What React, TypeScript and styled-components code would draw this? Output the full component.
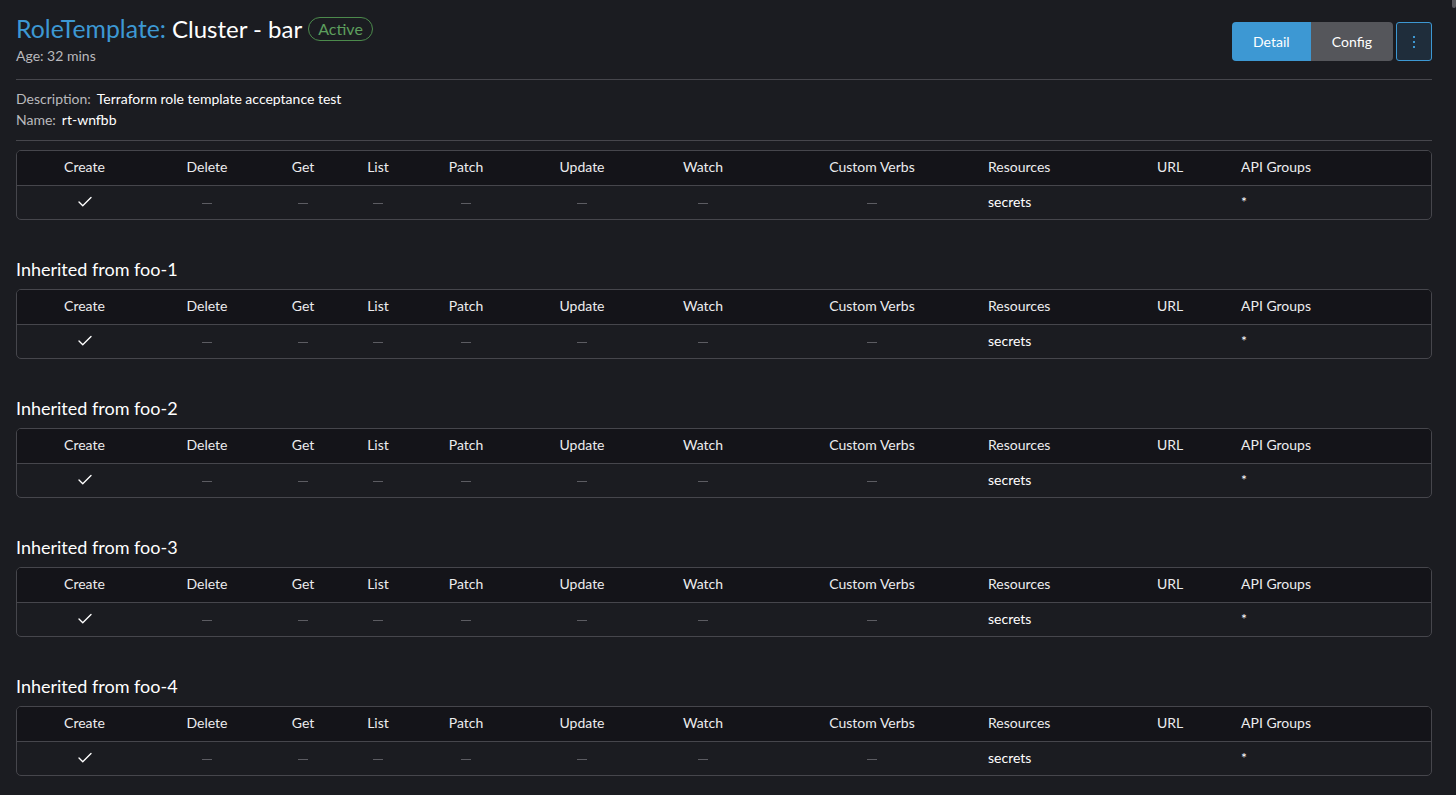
import styled, { createGlobalStyle } from "styled-components";
import { Check } from "lucide-react";

const GlobalStyle = createGlobalStyle`
	html, body {
		margin: 0;
		padding: 0;
		background: #1b1c21;
		color: #e6e6e6;
		font-family: Lato, "Noto Sans", "Liberation Sans", sans-serif;
	}
`;

const VERBS = ["Create", "Delete", "Get", "List", "Patch", "Update", "Watch", "Custom Verbs"];
const COLUMNS = "135px 110px 82px 68px 108px 124px 118px 220px 169px 84px 1fr";

interface Rule {
	verbs: string[];
	resources: string;
	url: string;
	apiGroups: string;
}

const rule: Rule = { verbs: ["Create"], resources: "secrets", url: "", apiGroups: "*" };

const inherited = ["foo-1", "foo-2", "foo-3", "foo-4"];

function RulesTable({ rules }: { rules: Rule[] }) {
	return (
		<TableBox>
			<HeadRow>
				{VERBS.map((v) => (
					<HeadCell key={v} center>
						{v}
					</HeadCell>
				))}
				<HeadCell>Resources</HeadCell>
				<HeadCell>URL</HeadCell>
				<HeadCell>API Groups</HeadCell>
			</HeadRow>
			{rules.map((r, i) => (
				<BodyRow key={i}>
					{VERBS.map((v) => (
						<Cell key={v} center>
							{r.verbs.includes(v) ? <Check size={18} strokeWidth={1.8} /> : <Dash />}
						</Cell>
					))}
					<Cell>{r.resources}</Cell>
					<Cell>{r.url}</Cell>
					<Cell>{r.apiGroups}</Cell>
				</BodyRow>
			))}
		</TableBox>
	);
}

export default function App() {
	return (
		<>
			<GlobalStyle />
			<Page>
				<Header>
					<div>
						<Title>
							<TypeName>RoleTemplate:</TypeName>
							<span>Cluster - bar</span>
							<Badge>Active</Badge>
						</Title>
						<Age>Age: 32 mins</Age>
					</div>
					<Actions>
						<ButtonGroup>
							<ToggleButton active>Detail</ToggleButton>
							<ToggleButton>Config</ToggleButton>
						</ButtonGroup>
						<MenuButton aria-label="More actions">
							<svg width="4" height="14" viewBox="0 0 4 14">
								<rect x="1" y="1" width="2" height="2" fill="#3d98d3" />
								<rect x="1" y="6" width="2" height="2" fill="#3d98d3" />
								<rect x="1" y="11" width="2" height="2" fill="#3d98d3" />
							</svg>
						</MenuButton>
					</Actions>
				</Header>
				<Divider />
				<Meta>
					<MetaLine>
						<MetaLabel>Description:</MetaLabel>
						<MetaValue>Terraform role template acceptance test</MetaValue>
					</MetaLine>
					<MetaLine>
						<MetaLabel>Name:</MetaLabel>
						<MetaValue>rt-wnfbb</MetaValue>
					</MetaLine>
				</Meta>
				<Divider />
				<Section first>
					<RulesTable rules={[rule]} />
				</Section>
				{inherited.map((name) => (
					<Section key={name}>
						<SectionTitle>Inherited from {name}</SectionTitle>
						<RulesTable rules={[rule]} />
					</Section>
				))}
			</Page>
			<ScrollThumb />
		</>
	);
}

const Page = styled.div`
	padding: 0 24px 40px 16px;
`;

const Header = styled.div`
	display: flex;
	justify-content: space-between;
	align-items: flex-start;
	padding-top: 13px;
	height: 79px;
	box-sizing: border-box;
`;

const Title = styled.h1`
	margin: 0;
	display: flex;
	align-items: center;
	gap: 6px;
	font-size: 24px;
	font-weight: 400;
	line-height: 32px;
	color: #ffffff;
	white-space: pre;
`;

const TypeName = styled.span`
	color: #3d98d3;
	font-size: 24.8px;
`;

const Badge = styled.span`
	padding: 0 9px;
	height: 22px;
	line-height: 22px;
	border: 1px solid #4c8a4c;
	border-radius: 12px;
	color: #5d9e5d;
	font-size: 16px;
`;

const Age = styled.div`
	font-size: 14px;
	color: #b9b9bd;
	margin-top: 2px;
`;

const Actions = styled.div`
	display: flex;
	gap: 3px;
	margin-top: 9px;
`;

const ButtonGroup = styled.div`
	display: flex;
	border-radius: 4px;
	overflow: hidden;
`;

const ToggleButton = styled.button<{ active?: boolean }>`
	height: 39px;
	padding: 0 ${({ active }) => (active ? "20px" : "21px")};
	min-width: ${({ active }) => (active ? "79px" : "82px")};
	border: none;
	background: ${({ active }) => (active ? "#3d98d3" : "#55565b")};
	color: #ffffff;
	font-family: inherit;
	font-size: 14px;
	cursor: pointer;
`;

const MenuButton = styled.button`
	width: 36px;
	height: 39px;
	display: flex;
	align-items: center;
	justify-content: center;
	background: #1f2d3b;
	border: 1px solid #3d98d3;
	border-radius: 3px;
	cursor: pointer;
`;

const Divider = styled.hr`
	margin: 0;
	border: none;
	border-top: 1px solid #46464c;
`;

const Meta = styled.div`
	padding: 10px 0 12px;
	display: flex;
	flex-direction: column;
	gap: 4px;
`;

const MetaLine = styled.div`
	font-size: 14px;
	line-height: 17px;
`;

const MetaLabel = styled.span`
	color: #b9b9bd;
	margin-right: 6px;
`;

const MetaValue = styled.span`
	color: #ffffff;
`;

const Section = styled.section<{ first?: boolean }>`
	margin-top: ${({ first }) => (first ? "9px" : "38px")};
`;

const SectionTitle = styled.h3`
	margin: 0 0 9px;
	font-size: 18px;
	font-weight: 400;
	line-height: 22px;
	color: #ffffff;
`;

const TableBox = styled.div`
	border: 1px solid #46464c;
	border-radius: 5px;
	overflow: hidden;
`;

const HeadRow = styled.div`
	display: grid;
	grid-template-columns: ${COLUMNS};
	height: 35px;
	box-sizing: border-box;
	padding-bottom: 3px;
	align-items: center;
	background: #141419;
	border-bottom: 1px solid #46464c;
`;

const BodyRow = styled.div`
	display: grid;
	grid-template-columns: ${COLUMNS};
	height: 33px;
	box-sizing: border-box;
	padding-bottom: 2px;
	align-items: center;
`;

const HeadCell = styled.div<{ center?: boolean }>`
	padding: 0 6px;
	font-size: 14px;
	color: #ececee;
	text-align: ${({ center }) => (center ? "center" : "left")};
`;

const Cell = styled.div<{ center?: boolean }>`
	padding: 0 6px;
	font-size: 14px;
	color: #ffffff;
	display: flex;
	align-items: center;
	justify-content: ${({ center }) => (center ? "center" : "flex-start")};
`;

const Dash = styled.span`
	display: block;
	width: 10px;
	height: 1px;
	background: #5c5c62;
	margin-top: 3px;
`;

const ScrollThumb = styled.div`
	position: fixed;
	top: 0;
	right: 0;
	width: 4px;
	height: 8px;
	border-radius: 0 0 3px 3px;
	background: #5a5b60;
`;
